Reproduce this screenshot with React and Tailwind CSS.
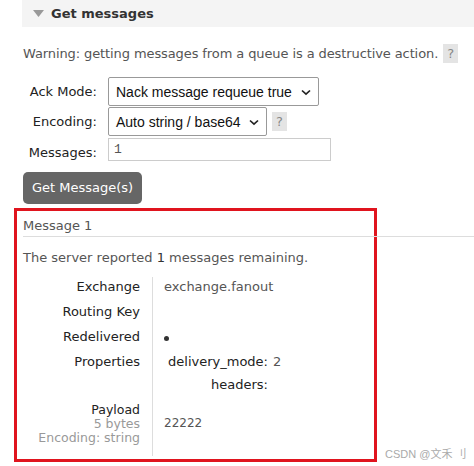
const font = { fontFamily: '"DejaVu Sans", Verdana, sans-serif' };

const Help = ({ className = '' }) => (
  <span className={`inline-flex items-center justify-center w-[15px] h-[19px] bg-[#e4e4e4] text-[#888] text-[13px] ${className}`}>?</span>
);

const Chevron = () => (
  <svg width="10" height="7" viewBox="0 0 10 7" className="absolute right-[7px] top-[11px]">
    <path d="M1 1.5 L5 5.2 L9 1.5" fill="none" stroke="#222" strokeWidth="1.7" />
  </svg>
);

const Select = ({ label, w }) => (
  <div
    className={`relative flex items-center h-[29px] ${w} border border-[#999] rounded-[2px] bg-white pl-[7px] text-[14px] text-[#111] whitespace-nowrap`}
    style={{ fontFamily: '"Liberation Sans", Arial, sans-serif' }}
  >
    {label}
    <Chevron />
  </div>
);

const Row = ({ label, children }) => (
  <div className="flex h-[25px]">
    <div className="w-[129px] text-right pr-[12px] pt-[2px] text-[#222] whitespace-nowrap">{label}</div>
    <div className="border-l border-[#ddd] pl-[11px] pt-[2px] text-[#555]">{children}</div>
  </div>
);

export default function App() {
  return (
    <div className="w-[474px] h-[466px] bg-white overflow-hidden text-[13px] leading-[16px] text-[#444] relative" style={font}>
      <div className="ml-[22px] h-[27px] bg-[#f4f4f4] flex items-center pl-[11px]">
        <svg width="11" height="7" viewBox="0 0 11 7" className="mr-[7px]">
          <path d="M0 0 H11 L5.5 7 Z" fill="#999" />
        </svg>
        <span className="font-bold text-[13px] text-[#333]">Get messages</span>
      </div>

      <div className="pl-[23px] mt-[17px] h-[19px] flex items-center whitespace-nowrap">
        <span className="text-[#555] tracking-[-0.1px]">Warning: getting messages from a queue is a destructive action.</span>
        <Help className="ml-[5px]" />
      </div>

      <div className="mt-[14px] flex flex-col">
        <div className="flex items-center">
          <div className="w-[97px] text-right text-[#222]">Ack Mode:</div>
          <div className="ml-[11px]"><Select label="Nack message requeue true" w="w-[211px]" /></div>
        </div>
        <div className="flex items-center mt-[1px]">
          <div className="w-[97px] text-right text-[#222]">Encoding:</div>
          <div className="ml-[11px]"><Select label="Auto string / base64" w="w-[159px]" /></div>
          <Help className="ml-[5px]" />
        </div>
        <div className="flex items-center mt-[2px]">
          <div className="w-[97px] text-right text-[#222] pt-[6px]">Messages:</div>
          <div
            className="ml-[11px] w-[223px] h-[23px] border border-[#ccc] pl-[5px] text-[13px] text-[#555] flex items-center"
            style={{ fontFamily: '"Liberation Mono", monospace' }}
          >
            1
          </div>
        </div>
      </div>

      <button className="block ml-[23px] mt-[11px] w-[119px] h-[32px] rounded-[5px] bg-[#666] text-white text-[13px]">
        Get Message(s)
      </button>

      <div className="mt-[4px] ml-[14px] w-[363px] h-[254px] border-[3px] border-[#e0141e]">
        <div className="ml-[6px] w-[460px] pt-[7px] pb-[2px] border-b border-[#ddd] text-[#555]">
          Message 1
        </div>
        <div className="ml-[6px] mt-[13px] text-[#555]">
          The server reported <span className="text-[#333]">1</span> messages remaining.
        </div>
        <div className="mt-[11px] ml-[6px] flex flex-col">
          <Row label="Exchange">exchange.fanout</Row>
          <Row label="Routing Key"> </Row>
          <Row label="Redelivered">
            <span className="inline-block mt-[5px] w-[5px] h-[5px] rounded-full bg-[#333]"></span>
          </Row>
          <div className="flex">
            <div className="w-[129px] text-right pr-[12px] flex flex-col whitespace-nowrap">
              <span className="h-[25px] pt-[2px] text-[#222]">Properties</span>
              <span className="mt-[26px] text-[#222] text-[12.5px] leading-[14px]">Payload</span>
              <span className="text-[#999] text-[12.5px] leading-[14px]">5 bytes</span>
              <span className="text-[#999] text-[12.5px] leading-[14px]">Encoding: string</span>
              <span className="h-[11px]"></span>
            </div>
            <div className="border-l border-[#ddd] pl-[11px] text-[#555] flex flex-col">
              <div className="flex h-[23px] pt-[2px]">
                <span className="w-[104px] text-right text-[#222]">delivery_mode:</span>
                <span className="ml-[5px]">2</span>
              </div>
              <div className="flex h-[23px] pt-[2px]">
                <span className="w-[104px] text-right text-[#222]">headers:</span>
              </div>
              <div className="mt-[17px] text-[12px]">22222</div>
            </div>
          </div>
        </div>
      </div>

      <div
        className="absolute left-[385px] top-[446px] text-[11px] text-[#aaa]"
        style={{ fontFamily: '"Liberation Sans", "Noto Sans CJK SC", sans-serif' }}
      >
        CSDN @文禾 刂
      </div>
    </div>
  );
}
